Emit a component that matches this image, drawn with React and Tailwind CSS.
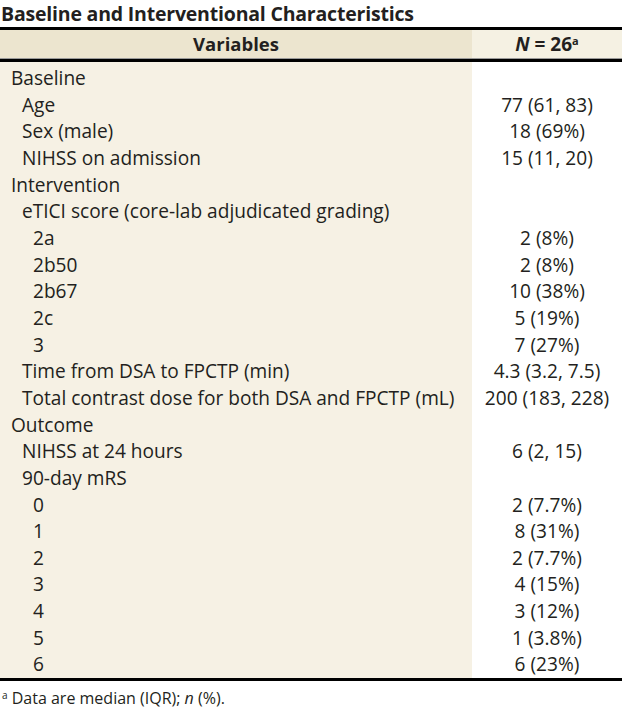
import React from "react";

const rows = [
  { l: 0, t: "Baseline", v: "" },
  { l: 1, t: "Age", v: "77 (61, 83)" },
  { l: 1, t: "Sex (male)", v: "18 (69%)" },
  { l: 1, t: "NIHSS on admission", v: "15 (11, 20)" },
  { l: 0, t: "Intervention", v: "" },
  { l: 1, t: "eTICI score (core-lab adjudicated grading)", v: "" },
  { l: 2, t: "2a", v: "2 (8%)" },
  { l: 2, t: "2b50", v: "2 (8%)" },
  { l: 2, t: "2b67", v: "10 (38%)" },
  { l: 2, t: "2c", v: "5 (19%)" },
  { l: 2, t: "3", v: "7 (27%)" },
  { l: 1, t: "Time from DSA to FPCTP (min)", v: "4.3 (3.2, 7.5)" },
  { l: 1, t: "Total contrast dose for both DSA and FPCTP (mL)", v: "200 (183, 228)" },
  { l: 0, t: "Outcome", v: "" },
  { l: 1, t: "NIHSS at 24 hours", v: "6 (2, 15)" },
  { l: 1, t: "90-day mRS", v: "" },
  { l: 2, t: "0", v: "2 (7.7%)" },
  { l: 2, t: "1", v: "8 (31%)" },
  { l: 2, t: "2", v: "2 (7.7%)" },
  { l: 2, t: "3", v: "4 (15%)" },
  { l: 2, t: "4", v: "3 (12%)" },
  { l: 2, t: "5", v: "1 (3.8%)" },
  { l: 2, t: "6", v: "6 (23%)" },
];

const indent = ["pl-[11px]", "pl-[22px]", "pl-[33px]"];

export default function App() {
  return (
    <div className="w-[622px] h-[715px] bg-white text-[#231f20] font-['Open_Sans',sans-serif]">
      <div className="h-[27px] pl-[1px] text-[19.5px] font-bold leading-[27px] tracking-[-0.2px]">
        Baseline and Interventional Characteristics
      </div>
      <div className="border-t-[3px] border-black">
        <div className="flex h-[29px] border-b border-[#9a9a9a]">
          <div className="w-[472px] bg-[#ece5cf] flex items-center justify-center text-[18.5px] font-bold">
            Variables
          </div>
          <div className="flex-1 bg-[#f5f1e3] flex items-center justify-center text-[19px] font-bold">
            <span>
              <i>N</i> = 26<sup className="text-[11px] font-bold">a</sup>
            </span>
          </div>
        </div>
      </div>
      <div className="border-t-[3px] border-b-[3px] border-black flex">
        <div className="w-[472px] bg-[#f6f1e4] pt-[3px]">
          {rows.map((r, i) => (
            <div key={i} className={`h-[26.67px] leading-[26.67px] text-[19.1px] whitespace-nowrap ${indent[r.l]}`}>
              {r.t}
            </div>
          ))}
        </div>
        <div className="flex-1 bg-white pt-[3px]">
          {rows.map((r, i) => (
            <div key={i} className="h-[26.67px] leading-[26.67px] text-[19.1px] text-center whitespace-nowrap">
              {r.v}
            </div>
          ))}
        </div>
      </div>
      <div className="pt-[6px] pl-[2px] text-[16px] leading-[22px]">
        <sup className="text-[10px]">a</sup> Data are median (IQR); <i>n</i> (%).
      </div>
    </div>
  );
}
